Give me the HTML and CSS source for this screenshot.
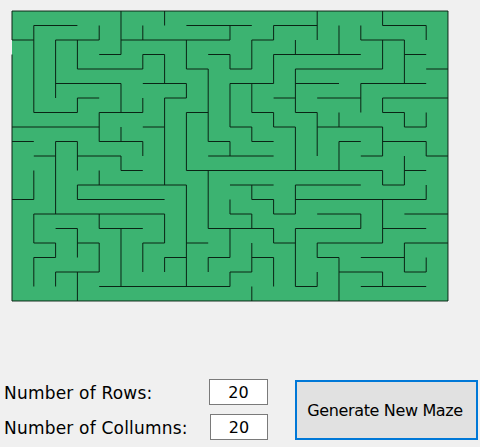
FILE: index.html
```html
<!DOCTYPE html>
<html lang="en">
<head>
<meta charset="utf-8">
<title>Maze</title>
<link rel="stylesheet" href="styles.css">
</head>
<body>
<main class="app">
<svg class="maze" viewBox="0 0 20 20" preserveAspectRatio="none" xmlns="http://www.w3.org/2000/svg">
<path class="walls" d="M0 3V20H20V0H0V2
M1 1H3M8 1H11M12 1H14M17 1H19
M0 2H1M2 2H4M5 2H10M11 2H12M16 2H18
M4 3H5M6 3H7M9 3H10M12 3H16M18 3H19
M3 4H6M8 4H9M10 4H11M13 4H17M19 4H20
M2 5H5M6 5H8M10 5H12M13 5H15M16 5H19
M3 6H4M7 6H8M12 6H13M14 6H16M17 6H20
M1 7H3M4 7H6M8 7H9M11 7H12M13 7H14M17 7H18
M0 8H4M6 8H7M10 8H11M12 8H13M14 8H17M18 8H19
M0 9H1M2 9H3M4 9H6M9 9H10M11 9H12M15 9H16M17 9H19
M1 10H2M3 10H5M9 10H12M16 10H17M19 10H20
M5 11H6M8 11H17M18 11H19
M3 12H8M10 12H12M13 12H16M17 12H18
M0 13H1M3 13H7M11 13H12M13 13H19
M1 14H7M10 14H11M12 14H13M14 14H16M18 14H20
M2 15H3M4 15H6M9 15H12M13 15H16M17 15H19
M1 16H2M3 16H4M6 16H7M8 16H9M12 16H13M14 16H17M18 16H20
M1 17H2M7 17H8M9 17H10M11 17H12M14 17H15M16 17H18
M2 18H4M10 18H11M15 18H17M18 18H19
M4 19H10M13 19H14M16 19H19
M1 1V7M1 11V13M1 14V16M1 17V19
M2 2V6M2 9V14M2 16V17M2 18V19
M3 2V4M3 6V7M3 9V11M3 12V13M3 15V17M3 18V20
M4 1V2M4 7V9M4 11V12M4 14V15M4 16V18
M5 0V3M5 5V7M5 8V9M5 10V11M5 15V19
M6 1V2M6 3V4M6 6V7M6 9V10M6 16V18
M7 0V1M7 3V5M7 6V12M7 14V16M7 17V18
M8 2V4M8 5V6M8 7V11M8 12V19
M9 4V9M9 11V15M9 17V18
M10 1V2M10 3V4M10 5V8M10 9V10M10 13V14M10 15V17M10 18V19
M11 2V4M11 5V7M11 8V9M11 12V13M11 14V15M11 16V18M11 19V20
M12 1V2M12 3V5M12 7V8M12 13V14M12 15V16M12 17V19
M13 2V3M13 4V7M13 8V11M13 12V14M13 15V19
M14 0V2M14 7V10M14 16V17M14 18V19
M15 1V3M15 7V8M15 9V11M15 17V20
M16 1V2M16 5V7M16 14V15
M17 0V1M17 2V4M17 6V7M17 8V10M17 11V12M17 13V16M17 18V19
M18 2V5M18 7V8M18 10V12M18 16V18
M19 1V2M19 7V8M19 9V10M19 12V13M19 17V18"/>
</svg>
<section class="controls">
<div class="fields">
<label class="field"><span class="label">Number of Rows:</span><input class="num num-first" value="20"></label>
<label class="field"><span class="label">Number of Collumns:</span><input class="num" value="20"></label>
</div>
<button class="generate" type="button">Generate New Maze</button>
</section>
</main>
</body>
</html>
```
FILE: styles.css
```css
html, body { margin: 0; padding: 0; }
body {
  width: 480px;
  height: 447px;
  overflow: hidden;
  background: #f0f0f0;
  font-family: "DejaVu Sans", sans-serif;
  color: #000;
}
.app { display: flex; flex-direction: column; height: 447px; }
.maze {
  display: block;
  width: 436px;
  height: 290px;
  margin: 11px 0 0 12px;
  background: #3cb371;
  overflow: visible;
  box-shadow: 1px 1px 0 #fff, 0 -1px 0 #fff;
}
.walls { fill: none; stroke: #0a2415; stroke-width: 1px; vector-effect: non-scaling-stroke; shape-rendering: crispEdges; }
.controls { display: flex; margin-top: 78px; padding-left: 4px; }
.fields { width: 291px; display: flex; flex-direction: column; gap: 9px; }
.field { display: flex; align-items: center; justify-content: space-between; height: 26px; padding-right: 27px; }
.label { font-size: 17px; letter-spacing: 0.2px; white-space: nowrap; padding-top: 1px; }
.num {
  box-sizing: border-box;
  width: 58px;
  height: 26px;
  border: 1px solid #7a7a7a;
  background: #fff;
  font: 16px "DejaVu Sans", sans-serif;
  text-align: center;
  padding: 0;
  color: #000;
}
.num-first { width: 59px; }
.generate {
  box-sizing: border-box;
  width: 183px;
  height: 60px;
  margin-top: 1px;
  border: 2px solid #0078d7;
  background: #e1e1e1;
  font: 16px "DejaVu Sans", sans-serif;
  letter-spacing: -0.35px;
  color: #000;
  padding: 1px 3px 0 0;
}
```
